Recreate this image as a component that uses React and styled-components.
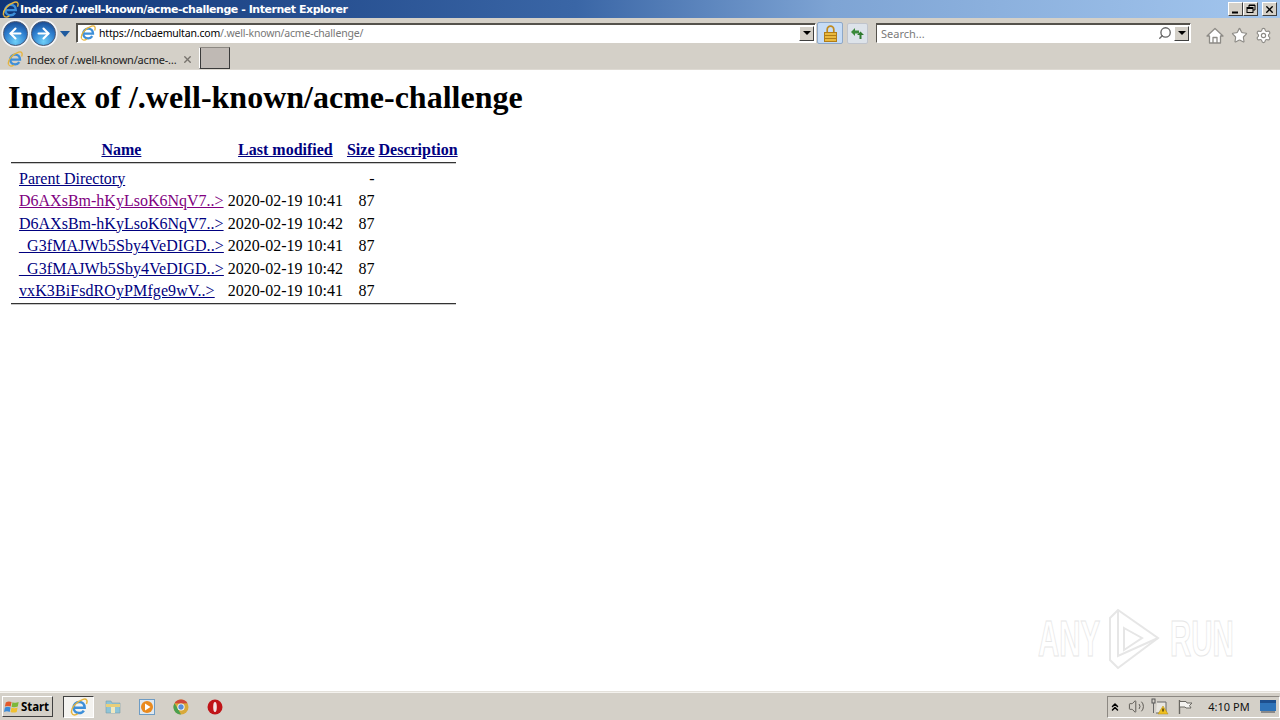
import styled, { createGlobalStyle } from "styled-components";
import { ArrowLeft, ArrowRight, Star, Settings, Search, X, ChevronsUp, Volume2 } from "lucide-react";

const GlobalStyle = createGlobalStyle`
  html, body {
    margin: 0;
    padding: 0;
    background: #ffffff;
    overflow: hidden;
  }
`;

const Page = styled.div`
  width: 1280px;
  height: 720px;
  display: flex;
  flex-direction: column;
  position: relative;
  overflow: hidden;
  font-family: "Noto Sans", "Liberation Sans", sans-serif;
`;

const TitleBar = styled.div`
  height: 18px;
  display: flex;
  align-items: center;
  padding: 0 3px 0 2px;
  background: linear-gradient(90deg, #0f3476 0%, #3a66a6 45%, #7ea4d4 65%, #a3c6ee 100%);
`;

const TitleText = styled.div`
  margin-left: 1px;
  color: #ffffff;
  font-family: "DejaVu Sans", sans-serif;
  font-size: 11px;
  font-weight: bold;
  letter-spacing: -0.46px;
  white-space: nowrap;
`;

const WindowButtons = styled.div`
  margin-left: auto;
  display: flex;
`;

const WindowButton = styled.div`
  width: 15px;
  height: 14px;
  margin-left: ${(props) => props.$gap || 0}px;
  box-sizing: border-box;
  background: #d4d0c8;
  border: 1px solid;
  border-color: #ffffff #404040 #404040 #ffffff;
  display: flex;
  align-items: center;
  justify-content: center;
  color: #000000;
`;

const Toolbar = styled.div`
  height: 30px;
  display: flex;
  align-items: center;
  background: #d4d0c8;
  padding-left: 3px;
`;

const NavButton = styled.div`
  width: 25px;
  height: 25px;
  margin-right: 3px;
  border-radius: 50%;
  box-sizing: border-box;
  border: 1px solid #46597a;
  background: radial-gradient(circle at 50% 85%, #6fd0f8 0%, #2f80d0 50%, #12397f 100%);
  box-shadow: 0 0 0 1.5px #f2f4f8;
  display: flex;
  align-items: center;
  justify-content: center;
  color: #ffffff;
`;

const NavDrop = styled.div`
  width: 0;
  height: 0;
  margin: 2px 6px 0 1px;
  border-left: 5px solid transparent;
  border-right: 5px solid transparent;
  border-top: 6px solid #1f5a9e;
`;

const AddressBox = styled.div`
  width: 740px;
  height: 20px;
  box-sizing: border-box;
  display: flex;
  align-items: center;
  background: #ffffff;
  border: 1px solid;
  border-color: #55524c #ffffff #ffffff #55524c;
  box-shadow: inset 1px 1px 0 #55524c;
  padding-left: 3px;
`;

const AddressText = styled.div`
  margin-left: 3px;
  font-family: "Noto Sans", sans-serif;
  font-size: 10.5px;
  letter-spacing: -0.18px;
  color: #000000;
  white-space: nowrap;
`;

const Muted = styled.span`
  color: #777777;
`;

const DropButton = styled.div`
  width: 15px;
  height: 15px;
  margin-left: auto;
  margin-right: 1px;
  box-sizing: border-box;
  background: #d4d0c8;
  border: 1px solid;
  border-color: #ffffff #404040 #404040 #ffffff;
  display: flex;
  align-items: center;
  justify-content: center;

  &::after {
    content: "";
    border-left: 4px solid transparent;
    border-right: 4px solid transparent;
    border-top: 4px solid #000000;
  }
`;

const SmallDrop = styled(DropButton)`
  margin-left: 2px;
`;

const SecureButton = styled.div`
  width: 26px;
  height: 22px;
  margin-left: 1px;
  box-sizing: border-box;
  background: #c6dcf6;
  border: 1px solid #8ea8c8;
  border-radius: 2px;
  display: flex;
  align-items: center;
  justify-content: center;
`;

const RefreshButton = styled.div`
  width: 21px;
  height: 21px;
  margin-left: 4px;
  box-sizing: border-box;
  background: #dde3ea;
  border: 1px solid #c0c4cc;
  border-radius: 2px;
  display: flex;
  align-items: center;
  justify-content: center;
`;

const SearchBox = styled.div`
  width: 315px;
  height: 20px;
  margin-left: 8px;
  box-sizing: border-box;
  display: flex;
  align-items: center;
  background: #ffffff;
  border: 1px solid;
  border-color: #55524c #ffffff #ffffff #55524c;
  box-shadow: inset 0 1px 0 #55524c;
  padding-left: 4px;
  color: #666666;
`;

const SearchLabel = styled.div`
  font-size: 11px;
  flex: 1;
  color: #7a7a7a;
`;

const ToolIcons = styled.div`
  margin-left: auto;
  display: flex;
  align-items: center;
  gap: 6px;
  padding-right: 8px;
  padding-top: 4px;
  color: #8d8b86;
`;

const ToolIcon = styled.div`
  width: 18px;
  height: 18px;
  display: flex;
  align-items: center;
  justify-content: center;
`;

const TabRow = styled.div`
  height: 22px;
  display: flex;
  align-items: flex-end;
  background: #d4d0c8;
  border-bottom: 1px solid #dedad3;
  box-sizing: border-box;
  padding-left: 7px;
`;

const Tab = styled.div`
  width: 192px;
  height: 20px;
  display: flex;
  align-items: center;
  font-size: 11px;
  color: #222222;
`;

const TabTitle = styled.div`
  margin-left: 4px;
  width: 153px;
  white-space: nowrap;
  letter-spacing: -0.2px;
`;

const TabClose = styled.div`
  margin-left: 2px;
  display: flex;
  color: #77736d;
`;

const NewTab = styled.div`
  width: 31px;
  height: 22px;
  box-sizing: border-box;
  background: #bfb9b4;
  border-top: 1px solid #8c8882;
  border-left: 1px solid #ffffff;
  border-right: 1px solid #3a3a3a;
  border-bottom: 1px solid #3a3a3a;
  box-shadow: inset 1px 0 0 #3a3a3a;
`;

const Content = styled.main`
  flex: 1;
  background: #ffffff;
  padding: 0 8px;
  font-family: "Liberation Serif", serif;
  font-size: 16px;
  color: #000000;
`;

const Heading = styled.h1`
  margin: 9px 0 22px;
  font-size: 32px;
  line-height: 37px;
  font-weight: bold;
  white-space: nowrap;
`;

const ListTable = styled.table`
  border-collapse: separate;
  border-spacing: 2px;
`;

const IconCell = styled.td`
  width: 6px;
  padding: 0;
`;

const HeadCell = styled.th`
  padding: 1px;
  text-align: center;
  white-space: nowrap;
`;

const Cell = styled.td`
  height: 18.5px;
  padding: 1px;
  white-space: nowrap;
  text-align: ${(props) => props.$align || "left"};
`;

const Rule = styled.hr`
  margin: 0 2px 0 0;
  height: 0;
  border: none;
  border-top: 1px solid #333333;
  box-shadow: 0 1px 0 #c8c8c8;
`;

const RuleCell = styled.th`
  padding: ${(props) => props.$padding};
`;

const FileLink = styled.a`
  color: ${(props) => (props.$visited ? "#800080" : "#000080")};
  text-decoration: underline;
  letter-spacing: ${(props) => props.$spacing || 0}px;
`;

const Watermark = styled.div`
  position: absolute;
  left: 1038px;
  top: 606px;
  display: flex;
  align-items: center;
  color: transparent;
  -webkit-text-stroke: 1px #e6e6e6;
  font-family: "Liberation Sans", sans-serif;
  font-size: 50px;
  font-weight: bold;
  line-height: 66px;
  user-select: none;
`;

const MarkWord = styled.span`
  display: inline-block;
  transform: scaleX(0.59);
  transform-origin: left center;
  width: ${(props) => props.$width}px;
  margin-left: ${(props) => props.$offset || 0}px;
`;

const Taskbar = styled.div`
  height: 28px;
  box-sizing: border-box;
  display: flex;
  align-items: center;
  background: #d4d0c8;
  border-top: 1px solid #f4f2ee;
  box-shadow: 0 -1px 0 #e4e1db;
  padding-left: 2px;
`;

const StartButton = styled.div`
  width: 51px;
  height: 21px;
  box-sizing: border-box;
  display: flex;
  align-items: center;
  gap: 1px;
  padding-left: 1px;
  background: #d4d0c8;
  border: 1px solid;
  border-color: #ffffff #404040 #404040 #ffffff;
  font-size: 11.5px;
  font-weight: bold;
  letter-spacing: -0.1px;
  color: #000000;
`;

const TaskItems = styled.div`
  margin-left: 10px;
  display: flex;
  align-items: center;
`;

const TaskItem = styled.div`
  width: ${(props) => (props.$active ? 31 : 34)}px;
  height: 22px;
  box-sizing: border-box;
  display: flex;
  align-items: center;
  justify-content: center;
  ${(props) =>
    props.$active &&
    `
    background: #f4f3f0;
    border: 1px solid;
    border-color: #404040 #ffffff #ffffff #404040;
    margin-right: 2px;
  `}
`;

const Tray = styled.div`
  margin-left: auto;
  width: 173px;
  height: 22px;
  box-sizing: border-box;
  display: flex;
  align-items: center;
  border: 1px solid;
  border-color: #8c8882 #ffffff #ffffff #8c8882;
`;

const TrayIcon = styled.div`
  width: ${(props) => props.$width}px;
  display: flex;
  justify-content: center;
  color: ${(props) => props.$color || "#55524c"};
`;

const Clock = styled.div`
  width: 60px;
  text-align: center;
  font-size: 11px;
  color: #111111;
`;

const IeLogo = ({ size = 16 }) => (
  <svg width={size} height={size} viewBox="0 0 16 16" fill="none">
    <path
      d="M3.2 8.6 H13 C13 5.4 10.8 3.6 8.2 3.6 C5.4 3.6 3.2 5.8 3.2 8.6 C3.2 11.4 5.4 13.4 8.2 13.4 C10 13.4 11.4 12.6 12.3 11.2"
      stroke="#3d8fd9"
      strokeWidth="2.3"
    />
    <path d="M1.6 13.6 C0 9 6 3 11.6 1.2 C15 0.2 15.8 2.6 14.6 5.4" stroke="#e6b43c" strokeWidth="1.3" />
    <path d="M1.6 13.6 C2.4 15.6 5 15.4 7 14" stroke="#e6b43c" strokeWidth="1.2" />
  </svg>
);

const LockIcon = () => (
  <svg width="13" height="17" viewBox="0 0 13 17">
    <path d="M3.2 8 V4.5 a3.3 3.3 0 0 1 6.6 0 V8" fill="none" stroke="#c08a1e" strokeWidth="1.7" />
    <rect x="0.5" y="7.5" width="12" height="9" fill="#e9b93e" stroke="#b07c18" />
    <path d="M0.5 10.5 h12 M0.5 13.5 h12" stroke="#b07c18" />
  </svg>
);

const RefreshIcon = () => (
  <svg width="15" height="13" viewBox="0 0 15 13">
    <path d="M1 5 L5 1 V3.5 H9 V6.5 H5 V9 z" fill="#3a8a3a" />
    <path d="M14 8 L10.5 4.5 L7 8 H9.5 V12 H11.5 V8 z" fill="#2e7a2e" />
  </svg>
);

const HomeIcon = () => (
  <svg width="18" height="17" viewBox="0 0 18 17" stroke="#8d8b86" strokeWidth="1.3" strokeLinejoin="round">
    <path d="M1 9 L9 1.5 L17 9 H14.5 V16 H3.5 V9 z" fill="#ffffff" />
    <path d="M7 16 V10.5 H11 V16" fill="none" />
  </svg>
);

const MinimizeIcon = () => (
  <svg width="9" height="9" viewBox="0 0 9 9">
    <rect x="1" y="6.5" width="6" height="2" fill="#000" />
  </svg>
);

const RestoreIcon = () => (
  <svg width="10" height="10" viewBox="0 0 10 10" fill="none" stroke="#000">
    <path d="M3 3 V1 H9 V6 H7" />
    <path d="M3 1.5 H9" />
    <rect x="1" y="3.5" width="6" height="5" />
    <path d="M1 4.5 H7" />
  </svg>
);

const WindowsFlag = () => (
  <svg width="16" height="16" viewBox="0 0 18 16">
    <path d="M2 3 Q5 1 8.5 2.5 L7.5 7.5 Q4.5 6 1 7.5 z" fill="#e2592a" />
    <path d="M9.5 2.7 Q13 4 16.5 2.5 L15.5 7.5 Q12 9 8.5 7.7 z" fill="#7cb83a" />
    <path d="M1 8.5 Q4.5 7 7.4 8.5 L6.4 13.5 Q3.5 12 0 13.5 z" fill="#3a8ad8" />
    <path d="M8.4 8.7 Q12 10 15.3 8.5 L14.3 13.5 Q11 15 7.4 13.7 z" fill="#f0c030" />
  </svg>
);

const FolderIcon = () => (
  <svg width="18" height="17" viewBox="0 0 18 17">
    <path d="M2 3 h5 l1 2 h8 v10 H2 z" fill="#8ec4d8" stroke="#7aa0a8" strokeWidth="0.6" />
    <path d="M2 6 h14 v3 H2 z" fill="#e8cf7a" />
    <rect x="7" y="9" width="4" height="6" fill="#f0e8c0" />
  </svg>
);

const MediaIcon = () => (
  <svg width="16" height="16" viewBox="0 0 16 16">
    <rect x="0.5" y="0.5" width="15" height="15" fill="#dfe8f0" stroke="#6e9cc4" />
    <circle cx="8" cy="8" r="6" fill="#ea8a1e" />
    <path d="M6 4.5 L11.5 8 L6 11.5 z" fill="#ffffff" />
  </svg>
);

const ChromeIcon = () => (
  <svg width="16" height="16" viewBox="0 0 16 16">
    <circle cx="8" cy="8" r="7.5" fill="#d8a93a" />
    <path d="M1.5 4.2 A7.5 7.5 0 0 1 14.5 4.2 L8 4.5 z" fill="#d0483a" />
    <path d="M1.5 4.2 L5 10 L8 15.5 A7.5 7.5 0 0 1 1.5 4.2 z" fill="#4aa050" />
    <circle cx="8" cy="8" r="3.6" fill="#ffffff" />
    <circle cx="8" cy="8" r="2.7" fill="#5a8ed8" />
  </svg>
);

const OperaIcon = () => (
  <svg width="16" height="16" viewBox="0 0 16 16">
    <circle cx="8" cy="8" r="7.5" fill="#c01418" />
    <ellipse cx="8" cy="8" rx="1.8" ry="5" fill="#f4e4e4" />
  </svg>
);

const NetworkIcon = () => (
  <svg width="20" height="17" viewBox="0 0 20 17">
    <rect x="1" y="1" width="3" height="4" fill="none" stroke="#555" />
    <path d="M2.5 5 V15 M6 4 H15 V15 H5" fill="#e8e6e0" stroke="#666" />
    <path d="M12 8 L17 16 H7 z" fill="#f0c020" stroke="#b08a10" strokeWidth="0.5" />
    <rect x="11.5" y="10.5" width="1" height="3" fill="#000" />
  </svg>
);

const FlagIcon = () => (
  <svg width="16" height="16" viewBox="0 0 16 16" fill="none" stroke="#6a6862">
    <path d="M2.5 1 V15" strokeWidth="1.4" />
    <path d="M3 2.5 H9 L10 4 H15 L12.5 6.5 L14 9 H9 L8 8 H3" fill="#f4f3f0" />
  </svg>
);

const MonitorIcon = () => (
  <svg width="16" height="13" viewBox="0 0 16 13">
    <rect x="0" y="0" width="16" height="11" fill="#2f73b8" />
    <rect x="0" y="0" width="16" height="3" fill="#1d4f8e" />
    <rect x="1" y="11" width="14" height="2" fill="#8a8a8a" />
  </svg>
);

const files = [
  { name: "D6AXsBm-hKyLsoK6NqV7..>", date: "2020-02-19 10:41", visited: true },
  { name: "D6AXsBm-hKyLsoK6NqV7..>", date: "2020-02-19 10:42" },
  { name: "_G3fMAJWb5Sby4VeDIGD..>", date: "2020-02-19 10:41", spacing: 0.09 },
  { name: "_G3fMAJWb5Sby4VeDIGD..>", date: "2020-02-19 10:42", spacing: 0.09 },
  { name: "vxK3BiFsdROyPMfge9wV..>", date: "2020-02-19 10:41", spacing: 0.09 },
];

const App = () => {
  return (
    <Page>
      <GlobalStyle />
      <TitleBar>
        <IeLogo size={17} />
        <TitleText>Index of /.well-known/acme-challenge - Internet Explorer</TitleText>
        <WindowButtons>
          <WindowButton><MinimizeIcon /></WindowButton>
          <WindowButton><RestoreIcon /></WindowButton>
          <WindowButton $gap={4}><X size={11} strokeWidth={3} /></WindowButton>
        </WindowButtons>
      </TitleBar>

      <Toolbar>
        <NavButton><ArrowLeft size={17} strokeWidth={3} /></NavButton>
        <NavButton><ArrowRight size={17} strokeWidth={3} /></NavButton>
        <NavDrop />
        <AddressBox>
          <IeLogo size={16} />
          <AddressText>
            https://ncbaemultan.com<Muted>/.well-known/acme-challenge/</Muted>
          </AddressText>
          <DropButton />
        </AddressBox>
        <SecureButton><LockIcon /></SecureButton>
        <RefreshButton><RefreshIcon /></RefreshButton>
        <SearchBox>
          <SearchLabel>Search...</SearchLabel>
          <Search size={14} strokeWidth={2.3} style={{ transform: "scaleX(-1)" }} />
          <SmallDrop />
        </SearchBox>
        <ToolIcons>
          <ToolIcon><HomeIcon /></ToolIcon>
          <ToolIcon><Star size={17} strokeWidth={1.6} fill="#ffffff" /></ToolIcon>
          <ToolIcon><Settings size={17} strokeWidth={1.6} fill="#ffffff" /></ToolIcon>
        </ToolIcons>
      </Toolbar>

      <TabRow>
        <Tab>
          <IeLogo size={16} />
          <TabTitle>Index of /.well-known/acme-…</TabTitle>
          <TabClose><X size={11} strokeWidth={3} /></TabClose>
        </Tab>
        <NewTab />
      </TabRow>

      <Content>
        <Heading>Index of /.well-known/acme-challenge</Heading>
        <ListTable>
          <thead>
            <tr>
              <IconCell as="th" />
              <HeadCell><FileLink href="#name">Name</FileLink></HeadCell>
              <HeadCell><FileLink href="#modified">Last modified</FileLink></HeadCell>
              <HeadCell><FileLink href="#size">Size</FileLink></HeadCell>
              <HeadCell><FileLink href="#description">Description</FileLink></HeadCell>
            </tr>
            <tr>
              <RuleCell colSpan={5} $padding="0 1px 3.25px"><Rule /></RuleCell>
            </tr>
          </thead>
          <tbody>
            <tr>
              <IconCell />
              <Cell><FileLink href="#parent">Parent Directory</FileLink></Cell>
              <Cell />
              <Cell $align="right">-</Cell>
              <Cell />
            </tr>
            {files.map((file, i) => (
              <tr key={i}>
                <IconCell />
                <Cell>
                  <FileLink href="#file" $visited={file.visited} $spacing={file.spacing}>{file.name}</FileLink>
                </Cell>
                <Cell>{file.date}</Cell>
                <Cell $align="right">87</Cell>
                <Cell />
              </tr>
            ))}
            <tr>
              <RuleCell colSpan={5} $padding="0 1px 1px"><Rule /></RuleCell>
            </tr>
          </tbody>
        </ListTable>
      </Content>

      <Watermark>
        <MarkWord $width={66}>ANY</MarkWord>
        <svg width="58" height="66" viewBox="0 0 58 66" fill="none" stroke="#e6e6e6" strokeWidth="2">
          <path d="M6 12 L14 4 L54 32 L14 62 L6 54 L6 12 z" />
          <path d="M14 4 V50 L54 32" />
          <path d="M20 22 L38 32 L20 44 z" />
        </svg>
        <MarkWord $width={62} $offset={8}>RUN</MarkWord>
      </Watermark>

      <Taskbar>
        <StartButton><WindowsFlag />Start</StartButton>
        <TaskItems>
          <TaskItem $active><IeLogo size={18} /></TaskItem>
          <TaskItem><FolderIcon /></TaskItem>
          <TaskItem><MediaIcon /></TaskItem>
          <TaskItem><ChromeIcon /></TaskItem>
          <TaskItem><OperaIcon /></TaskItem>
        </TaskItems>
        <Tray>
          <TrayIcon $width={14} $color="#000000"><ChevronsUp size={12} strokeWidth={3} /></TrayIcon>
          <TrayIcon $width={29}><Volume2 size={17} strokeWidth={1.3} /></TrayIcon>
          <TrayIcon $width={20}><NetworkIcon /></TrayIcon>
          <TrayIcon $width={28}><FlagIcon /></TrayIcon>
          <Clock>4:10 PM</Clock>
          <TrayIcon $width={18}><MonitorIcon /></TrayIcon>
        </Tray>
      </Taskbar>
    </Page>
  );
};

export default App;
